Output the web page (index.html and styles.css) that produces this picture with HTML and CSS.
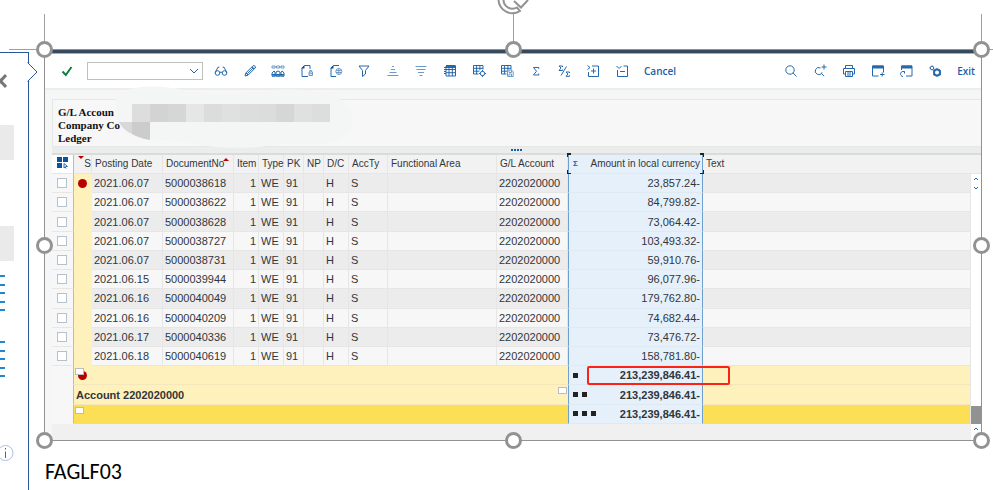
FILE: index.html
```html
<!DOCTYPE html>
<html lang="en">

<head>
  <meta charset="UTF-8" />
  <meta name="viewport" content="width=device-width, initial-scale=1.0" />
  <title>FAGLF03</title>
  <link rel="stylesheet" href="styles.css">
</head>

<body>
  <aside class="side">
    <svg class="notch" viewBox="0 0 12 20"><path d="M1 0V1L10 10L1 19V20" /></svg>
    <button class="close" aria-label="Close"><svg viewBox="0 0 7 16"><path d="M6 2L-5 14M6 14L-5 2" /></svg></button>
    <div class="block"></div>
    <div class="block second"></div>
    <div class="lines"><i></i><i></i><i></i><i></i><i></i></div>
    <div class="lines more"><i></i><i></i><i></i><i></i><i></i></div>
    <svg class="info" viewBox="0 0 15 18"><circle cx="5.5" cy="9" r="7.5" /><path d="M5.5 7.5V14M5.5 4V5.6" /></svg>
  </aside>

  <main class="page">
    <figure class="frame">
      <div class="window">
        <div class="titlebar"></div>
        <div class="toolbar">
          <button class="ok" aria-label="Enter"><svg viewBox="0 0 16 16"><path d="M3.5 8.5L6.8 12L12.5 4" /></svg></button>
          <select class="command" aria-label="Command"><option></option></select>
          <div class="tools">
            <button aria-label="Display"><svg viewBox="0 0 16 16"><circle cx="4.5" cy="10" r="2.3" /><circle cx="11.5" cy="10" r="2.3" /><path d="M7 9.5q1-1 2 0M2.2 9.5L5 4.2h1.3M13.8 9.5L11 4.2H9.700" /></svg></button>
            <button aria-label="Change"><svg viewBox="0 0 16 16"><path d="M3 13l.8-3L11 2.800q1-.6 1.900.3t.3 1.900L6 12.200zM4 10l2 2M10 4l2 2M5.300 10.800L11.500 4.600" /></svg></button>
            <button aria-label="Check entries"><svg viewBox="0 0 16 16"><path class="soft" d="M2 3h3v2H2zM6.500 3h3v2h-3zM11 3h3v2h-3zM5 4h1.500M9.500 4H11" /><path d="M2 13v-3l2-2 1 1v4zM6 13V9l2-1 2 1v4zM11 13V9l1.200-1L14 10v3zM2 11.500h12M2 13h12" /></svg></button>
            <button aria-label="Lock document"><svg viewBox="0 0 16 16"><path d="M9 13.500H3V5l2.500-2.500H11V6" /><path class="fill" d="M2.500 5.500V5L5.500 2v3.500z" /><path class="soft" d="M10 9h3.500v3.500H10zM10.700 9V7.500h2V9M10 10.800h3.500" /></svg></button>
            <button aria-label="Web document"><svg viewBox="0 0 16 16"><path d="M8 13.500H3V5l2.500-2.500H11" /><path class="fill" d="M2.500 5.500V5L5.500 2v3.500z" /><circle class="soft" cx="10.800" cy="8.500" r="3" /><path class="soft" d="M8 7.600h5.500M8 9.500h5.500M10.800 5.500v6" /></svg></button>
            <button aria-label="Filter"><svg viewBox="0 0 16 16"><path d="M3 3h10L9.500 7.500V11l-3 2.500v-6z" /></svg></button>
            <button aria-label="Sort ascending"><svg class="soft" viewBox="0 0 16 16"><path d="M7 3.500h2M6 6.500h4M4.500 9.500h7M2.500 12.500h11" /></svg></button>
            <button aria-label="Sort descending"><svg class="soft" viewBox="0 0 16 16"><path d="M2.500 3.500h11M3.500 6.500h9M5 9.500h6M6.500 12.500h3" /></svg></button>
            <button aria-label="Spreadsheet"><svg viewBox="0 0 16 16"><path class="bar" d="M4 3.500h9.500" /><path d="M4 3h9.500v10H4zM4 6.500h9.500M4 9.700h9.500M7 3v10M10.300 3v10M2 4.500h2M2 6.500h2M2 8.500h2M2 10.500h2" /></svg></button>
            <button aria-label="Choose layout"><svg viewBox="0 0 16 16"><path d="M7.500 11H2.500V2.500h9.500v4M2.500 5.300h9.500M2.500 8.200h6M5.600 2.500V11M8.900 2.500V7" /><circle cx="11.500" cy="10.500" r="2.200" /><path d="M11.500 7v1.500M11.500 12.500V14M8 10.500h1.500M13.500 10.500H15" /></svg></button>
            <button aria-label="Save layout"><svg viewBox="0 0 16 16"><path d="M7.500 11H2.500V2.500h9.500v4M2.500 5.300h9.500M2.500 8.200h6M5.600 2.500V11M8.900 2.500V7" /><path class="soft" d="M8.500 7h4l1.700 1.500v5H8.500zM10 7v2.500h2.500V7M10 13.500V11h2.500v2.500" /></svg></button>
            <button aria-label="Total"><svg viewBox="0 0 16 16"><path d="M10.800 5.800V4.500H5.500l3 3.700-3 3.800h5.300v-1.500" /></svg></button>
            <button aria-label="Subtotal"><svg viewBox="0 0 16 16"><path d="M6.500 4V3H3l2 2-2 2.500h3.500v-1M13.500 10V9H10l2 2-2 2.300h3.500v-1M10.500 3.500L5 12.500" /></svg></button>
            <button aria-label="Expand"><svg viewBox="0 0 16 16"><path d="M2.500 2.500L5 4.500 2.500 6.500M7 3h6.500v10.500H3.500V9M8.500 5.500v5M6 8h5" /></svg></button>
            <button aria-label="Collapse"><svg viewBox="0 0 16 16"><path d="M2.500 3L5 5.500 7.500 3M9.500 3h4v10.500H3.500V7M6 8.500h5" /></svg></button>
          </div>
          <button class="text">Cancel</button>
          <div class="tools right">
            <button aria-label="Find"><svg viewBox="0 0 16 16"><circle cx="7" cy="7" r="4.200" /><path d="M10 10l3.500 3.500" /></svg></button>
            <button aria-label="Find next"><svg viewBox="0 0 16 16"><path d="M8.500 5A3.500 3.500 0 1 0 10 9.300M9.200 10.200l3 3M12 1.500v5M9.500 4h5" /></svg></button>
            <button aria-label="Print"><svg viewBox="0 0 16 16"><path d="M4.500 5.500v-3h7v3M4.500 11H2.500V5.500h11V11h-2M4.500 8.500h7v5h-7zM6 10h4M6 12h4" /></svg></button>
            <button aria-label="New window"><svg viewBox="0 0 16 16"><path class="bar" d="M2.500 4h11" /><path d="M8.500 13h-6V3h11v6.500M10 11.500h4.500M12.200 9.500v4" /></svg></button>
            <button aria-label="Shortcut"><svg viewBox="0 0 16 16"><path class="bar" d="M3.500 4h10.500" /><path d="M3.500 7V3H14v10H8M6.500 9A2.500 2.500 0 1 0 5 13.500M4.500 8.500h2v2" /></svg></button>
            <button aria-label="Settings"><svg viewBox="0 0 16 16"><circle cx="5" cy="5" r="1.800" /><circle class="gear" cx="10" cy="9.500" r="3" /><path d="M2.500 5H3M5 2.500V3M10 5v1M10 13v1M5.800 7.500l1.200.7M14 7.500l-1 .5M6 12l1-.7M14 12l-1-.7" /></svg></button>
          </div>
          <button class="text exit">Exit</button>
        </div>

        <div class="content">
          <div class="info-head">
            <svg class="smudge" viewBox="0 0 240 66">
              <path class="cloud" d="M2 14C8 0 40 -4 80 6C130 14 150 0 190 4C220 6 242 16 240 38C236 58 210 60 170 58C120 66 90 60 60 54C30 56 10 46 6 38Z" />
              <g>
                <path fill="#ddd" d="M19 18h18v18H19zM127 18h18v18h-18zM199 18h18v18h-18z" />
                <path fill="#d3d3d3" d="M37 18h18v18H37z" />
                <path fill="#d6d6d6" d="M55 18h18v18H55zM163 18h18v18h-18z" />
                <path fill="#e6e6e6" d="M73 18h18v18H73z" />
                <path fill="#dcdcdc" d="M91 18h18v18H91zM145 18h18v18h-18z" />
                <path fill="#e0e0e0" d="M109 18h18v18h-18zM181 18h18v18h-18z" />
                <path fill="#d8d8d8" d="M6 36h13v12Q10 44 6 36z" />
                <path fill="#ccc" d="M19 36h18v18Q26 52 19 48z" />
              </g>
            </svg>
            <p>G/L Accoun</p>
            <p>Company Co</p>
            <p>Ledger</p>
          </div>
          <div class="splitter"><i></i><i></i><i></i><i></i></div>

          <table class="grid">
            <colgroup>
              <col class="w22"><col class="w18"><col class="w71"><col class="w71"><col class="w25"><col class="w25">
              <col class="w20"><col class="w20"><col class="w25"><col class="w39"><col class="w109"><col class="w71">
              <col class="w135"><col><col class="w10">
            </colgroup>
            <thead>
              <tr>
                <th class="pick"><button aria-label="Select all"><svg viewBox="0 0 12 12"><path class="fill" d="M0 0h5v5H0zM6 0h5v5H6zM0 6h5v5H0z" /><path d="M7 6.500v4.500l1.200-1 1 1.500M7 6.500l3.500 3H8.500" /></svg></button></th>
                <th class="status"><i class="down"></i>S</th>
                <th>Posting Date</th>
                <th class="sorted">DocumentNo<i class="up"></i></th>
                <th class="num">Item</th>
                <th>Type</th>
                <th>PK</th>
                <th>NP</th>
                <th>D/C</th>
                <th>AccTy</th>
                <th>Functional Area</th>
                <th>G/L Account</th>
                <th class="amount"><span class="corners"></span><div class="cell"><b class="sigma">Σ</b><span>Amount in local currency</span></div></th>
                <th colspan="2" class="last">Text</th>
              </tr>
            </thead>
            <tbody id="rows">
              <tr class="sub">
                <td class="pick"></td>
                <td colspan="11" class="label"><i class="note"></i><i class="dot low"></i></td>
                <td class="amount"><span class="mark"></span><div class="cell"><span class="squares"><i></i></span><span>213,239,846.41-</span></div></td>
                <td></td>
              </tr>
              <tr class="sub">
                <td class="pick"></td>
                <td colspan="11" class="label">Account 2202020000<i class="note end"></i></td>
                <td class="amount"><div class="cell"><span class="squares"><i></i><i></i></span><span>213,239,846.41-</span></div></td>
                <td></td>
              </tr>
              <tr class="sub total">
                <td class="pick"></td>
                <td colspan="11" class="label"><i class="note"></i></td>
                <td class="amount"><div class="cell"><span class="squares"><i></i><i></i><i></i></span><span>213,239,846.41-</span></div></td>
                <td></td>
              </tr>
            </tbody>
          </table>
          <div class="bottom"><span class="page-up"><svg viewBox="0 0 6 4"><path d="M1 3L3 1L5 3" /></svg></span></div>
        </div>
      </div>

      <!-- selection handles -->
      <i class="guide g-left"></i><i class="guide g-mid"></i><i class="guide g-right"></i>
      <i class="guide flat g-west"></i><i class="guide flat g-east"></i>
      <svg class="rotate" viewBox="0 0 40 16"><path d="M5.500 0A14 14 0 0 0 27 11L24 7.500A9 9 0 0 1 10.500 0M21 1l7 6.500L35 0" /></svg>
      <i class="handle top left"></i><i class="handle top mid"></i><i class="handle top right"></i>
      <i class="handle half left"></i><i class="handle half right"></i>
      <i class="handle base left"></i><i class="handle base mid"></i><i class="handle base right"></i>
    </figure>
    <p class="caption">FAGLF03</p>
  </main>

  <script>
    const items = [
      ['2021.06.07', '5000038618', '23,857.24-'],
      ['2021.06.07', '5000038622', '84,799.82-'],
      ['2021.06.07', '5000038628', '73,064.42-'],
      ['2021.06.07', '5000038727', '103,493.32-'],
      ['2021.06.07', '5000038731', '59,910.76-'],
      ['2021.06.15', '5000039944', '96,077.96-'],
      ['2021.06.16', '5000040049', '179,762.80-'],
      ['2021.06.16', '5000040209', '74,682.44-'],
      ['2021.06.17', '5000040336', '73,476.72-'],
      ['2021.06.18', '5000040619', '158,781.80-']
    ]

    // the scrollbar cell runs down all 13 rows
    const scroll = `<td class="scroll" rowspan="13"><div class="track">
      <svg viewBox="0 0 6 14"><path d="M1 3L3 1L5 3M1 10L3 12L5 10" /></svg><i></i></div></td>`

    const html = items.map(([date, doc, amount], i) => `<tr>
      <td class="pick"><input type="checkbox" aria-label="Select ${doc}"></td>
      <td class="status">${i === 0 ? '<i class="dot"></i>' : ''}</td>
      <td>${date}</td><td>${doc}</td><td class="num">1</td><td>WE</td><td>91</td><td></td>
      <td>H</td><td>S</td><td></td><td>2202020000</td>
      <td class="amount">${amount}</td><td></td>${i === 0 ? scroll : ''}
    </tr>`).join('')

    document.querySelector('#rows').insertAdjacentHTML('afterbegin', html)
  </script>
</body>

</html>
```
FILE: styles.css
```css
* {
  box-sizing: border-box;
}

body {
  margin: 0;
  min-height: 100vh;
  display: flex;
  overflow: hidden;
  background-color: #fff;
  font-family: "Liberation Sans", Arial, sans-serif;
  font-size: 11px;
  color: #32363a;
}

button {
  padding: 0;
  border: 0;
  background: none;
  font: inherit;
}

svg {
  display: block;
  fill: none;
  stroke: #2468ae;
}

p,
figure {
  margin: 0;
}

/* left panel */
.side {
  position: relative;
  flex: none;
  width: 29px;
  margin-top: 52px;
  border-top: 1px solid #2b579a;
  border-right: 1px solid #2b579a;
}

.notch {
  position: absolute;
  left: 27px;
  top: 9px;
  width: 12px;
  height: 20px;
  fill: #fff;
  stroke: #2b579a;
}

.close {
  display: block;
  margin-top: 20px;
}

.close svg {
  width: 7px;
  height: 16px;
  stroke: #777;
  stroke-width: 3;
}

.block {
  width: 14px;
  height: 35px;
  margin-top: 36px;
  background-color: #eaeaea;
}

.block.second {
  margin-top: 66px;
}

.lines {
  display: flex;
  flex-direction: column;
  justify-content: space-between;
  width: 5px;
  height: 36px;
  margin-top: 14px;
}

.lines.more {
  margin-top: 30px;
}

.lines i {
  height: 2px;
  background-color: #2088cc;
}

.info {
  width: 15px;
  height: 18px;
  margin-top: 67px;
  stroke: #3f69ae;
}

.info circle {
  stroke: #a9bfe0;
}

/* selected picture */
.page {
  flex: 1;
  min-width: 0;
  padding: 49px 11px 0 15px;
}

.frame {
  position: relative;
}

.window {
  border: 1px solid #929292;
  border-top-color: #8a949e;
}

.titlebar {
  height: 4px;
  background-color: #354a5f;
  border-bottom: 1px solid #a5adb5;
}

.toolbar {
  display: flex;
  align-items: center;
  height: 34px;
  padding: 0 6px 0 14px;
  background-color: #fff;
}

.toolbar svg {
  width: 16px;
  height: 16px;
  margin: 0 auto;
}

.toolbar .ok svg {
  stroke: #107e3e;
  stroke-width: 2;
}

.command {
  appearance: none;
  width: 116px;
  height: 18px;
  margin: 0 4px 0 12px;
  border: 1px solid #bfbfbf;
  border-radius: 0;
  background: #fff url("data:image/svg+xml,%3Csvg xmlns='http://www.w3.org/2000/svg' width='10' height='6'%3E%3Cpath d='M1 1L5 5L9 1' fill='none' stroke='%232468ae'/%3E%3C/svg%3E") no-repeat right 3px center;
}

.tools {
  display: flex;
  width: 429px;
}

.tools.right {
  width: 172px;
  margin-left: auto;
}

.tools button {
  flex: 1;
}

.tools .soft {
  stroke: #6c9bcb;
}

.fill {
  fill: #0854a0;
  stroke: none;
}

.bar {
  stroke-width: 3;
}

.gear {
  stroke-width: 2;
}

.text {
  padding-left: 8px;
  font-family: "Open Sans", sans-serif;
  font-size: 10px;
  font-weight: 600;
  color: #1a60a8;
}

.content {
  padding-left: 7px;
  background-color: #f5f6f6;
  border-top: 2px solid #ededed;
}

.info-head {
  position: relative;
  height: 48px;
  margin-top: 9px;
  padding: 6px 5px;
  border: 1px solid #e6e8e8;
  border-right: 0;
  background-color: #f7f7f7;
  font-family: "Liberation Serif", "Times New Roman", serif;
  font-weight: bold;
  line-height: 13px;
  color: #111;
}

.smudge {
  position: absolute;
  left: 60px;
  top: -14px;
  width: 240px;
  height: 66px;
  stroke: none;
}

.cloud {
  fill: #f4f5f5;
}

.splitter {
  display: flex;
  justify-content: center;
  align-items: center;
  gap: 1px;
  height: 8px;
  background-color: #ebeded;
  border-bottom: 2px solid #dadcdc;
}

.splitter i {
  width: 2px;
  height: 2px;
  background-color: #1660a8;
}

/* line items */
.grid {
  width: 100%;
  height: 269px;
  table-layout: fixed;
  border-collapse: separate;
  border-spacing: 0;
  line-height: 12px;
}

.w10 { width: 10px; }
.w18 { width: 18px; }
.w20 { width: 20px; }
.w22 { width: 22px; }
.w25 { width: 25px; }
.w39 { width: 39px; }
.w71 { width: 71px; }
.w109 { width: 109px; }
.w135 { width: 135px; }

.grid th,
.grid td {
  padding: 0 2px;
  border-right: 1px solid #e6e6e6;
  border-bottom: 1px solid #e6e6e6;
  text-align: left;
  white-space: nowrap;
}

.grid th {
  height: 19px;
  padding-left: 3px;
  font-size: 10px;
  font-weight: normal;
  background-color: #f2f2f2;
}

.grid td {
  background-color: #ececec;
}

.grid tr:nth-child(even) td {
  background-color: #f7f7f7;
}

.grid .num {
  text-align: right;
}

.grid tr .pick {
  padding: 0;
  background-color: #f7f7f7;
  border-right: 1px solid #bbb;
}

.grid th.pick {
  background-color: #fff;
}

.pick svg {
  width: 12px;
  height: 12px;
  margin-left: 5px;
}

.pick input {
  appearance: none;
  display: block;
  width: 10px;
  height: 10px;
  margin: 0 5px;
  border: 1px solid #b5c1cd;
  background-color: #fff;
}

.grid th.status {
  position: relative;
  padding: 0;
  text-align: right;
}

.grid tbody tr td.status {
  padding: 0 4px;
  background-color: #fef1bb;
  border-color: #fef1bb;
}

.down,
.up {
  position: absolute;
  border: 3px solid transparent;
}

.down {
  left: 4px;
  top: 1px;
  border-top-color: #bb0000;
}

.up {
  right: 4px;
  top: 0;
  border-bottom-color: #bb0000;
}

.sorted {
  position: relative;
}

.dot {
  display: block;
  width: 9px;
  height: 9px;
  border-radius: 50%;
  background-color: #bb0000;
}

.grid tr th.amount,
.grid tbody tr td.amount {
  position: relative;
  padding: 0 2px 0 4px;
  text-align: right;
  background-color: #e5f0fa;
  border-left: 1px solid #6f9fcd;
  border-right: 1px solid #6f9fcd;
  border-bottom-color: #dfe9f2;
}

.cell {
  display: flex;
  justify-content: space-between;
  align-items: center;
}

.sigma {
  font-size: 8px;
  color: #1660a8;
}

/* black corner marks round the selected heading */
.corners {
  position: absolute;
  inset: -2px -2px -1px;
  background:
    linear-gradient(#222, #222) 0 0 / 4px 2px,
    linear-gradient(#222, #222) 0 0 / 1px 4px,
    linear-gradient(#222, #222) 100% 0 / 4px 2px,
    linear-gradient(#222, #222) 100% 0 / 1px 4px,
    linear-gradient(#222, #222) 0 100% / 4px 1px,
    linear-gradient(#222, #222) 0 100% / 1px 4px,
    linear-gradient(#222, #222) 100% 100% / 4px 1px,
    linear-gradient(#222, #222) 100% 100% / 1px 4px;
  background-repeat: no-repeat;
}

.grid .last {
  border-right: 0;
}

.grid tbody tr.sub td {
  font-weight: bold;
  background-color: #fef1bb;
  border-bottom-color: #f3e7bb;
}

.grid tbody tr.total td {
  background-color: #fddf55;
  border-bottom-color: #fddf55;
}

.grid tbody tr.sub td.pick {
  background-color: #f7f7f7;
  border-bottom-color: #f7f7f7;
}

.grid tbody tr.sub td.amount {
  background-color: #e5f0fa;
  border-bottom-color: #dfe9f2;
}

.grid tr.sub .label {
  position: relative;
  border-right: 0;
}

.note {
  position: absolute;
  z-index: 1;
  left: 1px;
  top: 2px;
  width: 9px;
  height: 7px;
  border: 1px solid #b8bcc4;
  background-color: #fff;
}

.note.end {
  left: auto;
  right: 1px;
}

.dot.low {
  position: absolute;
  left: 4px;
  top: 5px;
}

.squares {
  display: flex;
  gap: 4px;
}

.squares i {
  width: 5px;
  height: 5px;
  background-color: #222;
}

.mark {
  position: absolute;
  z-index: 1;
  left: 18px;
  right: -28px;
  top: 0;
  height: 19px;
  border: 2px solid #fb2414;
  border-radius: 2px;
}

.grid tr .scroll {
  height: 1px;
  padding: 0;
  border: 0;
  vertical-align: top;
  background-color: #fff;
}

.track {
  display: flex;
  flex-direction: column;
  justify-content: space-between;
  height: 100%;
}

.track svg {
  width: 6px;
  height: 14px;
  margin: 3px auto;
}

.track i {
  height: 18px;
  background-color: #929292;
}

.bottom {
  display: flex;
  justify-content: flex-end;
  height: 16px;
  background-color: #f0f0f0;
}

.page-up {
  width: 10px;
  padding: 3px 2px;
  background-color: #fff;
}

/* handles and guides */
.handle {
  position: absolute;
  width: 17px;
  height: 17px;
  margin: -8px;
  border: 3px solid #929292;
  border-radius: 50%;
  background-color: #fff;
}

.handle.top { top: 0; }
.handle.half { top: 50%; }
.handle.base { bottom: 0; }
.handle.left { left: 0; }
.handle.mid { left: 50%; }
.handle.right { right: 0; }

.guide {
  position: absolute;
  top: -35px;
  width: 1px;
  height: 35px;
  background-color: #a0a0a0;
}

.guide.flat {
  top: 0;
  width: 35px;
  height: 1px;
}

.g-left { left: 0; }
.g-mid { left: 50%; }
.g-right { right: 0; }
.g-west { right: 100%; }
.g-east { left: 100%; }

.rotate {
  position: absolute;
  left: 50%;
  top: -49px;
  width: 40px;
  height: 16px;
  margin-left: -20px;
  stroke: #929292;
  stroke-width: 2;
}

.caption {
  margin-top: 18px;
  padding-left: 1px;
  font-family: Carlito, "Open Sans", sans-serif;
  font-size: 22px;
  line-height: 26px;
  color: #000;
}
```
